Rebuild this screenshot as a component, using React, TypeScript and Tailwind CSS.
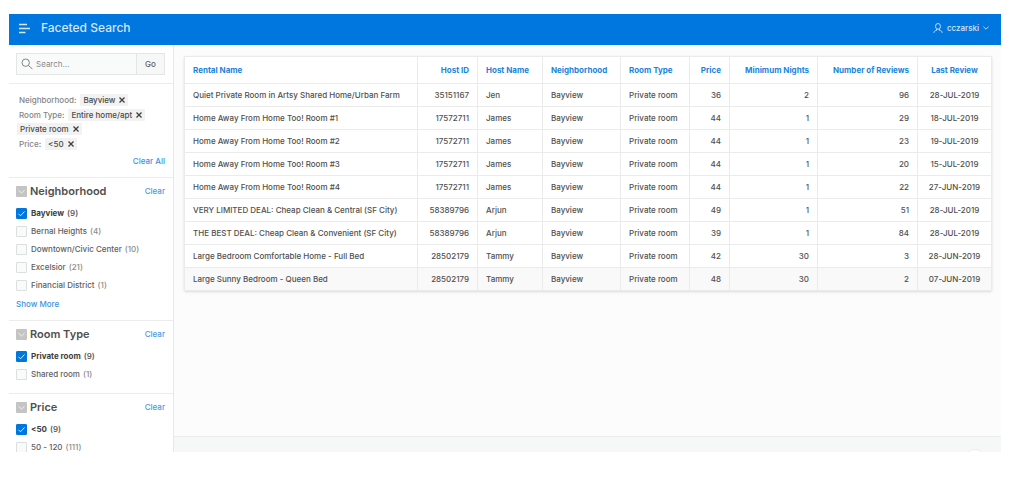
import { useState } from 'react'

type FacetItem = { label: string; count: number; checked?: boolean }
type Facet = { title: string; items: FacetItem[]; more?: boolean }

const filters = [
  { label: 'Neighborhood', values: ['Bayview'] },
  { label: 'Room Type', values: ['Entire home/apt', 'Private room'] },
  { label: 'Price', values: ['<50'] },
]

const facets: Facet[] = [
  {
    title: 'Neighborhood',
    more: true,
    items: [
      { label: 'Bayview', count: 9, checked: true },
      { label: 'Bernal Heights', count: 4 },
      { label: 'Downtown/Civic Center', count: 10 },
      { label: 'Excelsior', count: 21 },
      { label: 'Financial District', count: 1 },
    ],
  },
  {
    title: 'Room Type',
    items: [
      { label: 'Private room', count: 9, checked: true },
      { label: 'Shared room', count: 1 },
    ],
  },
  {
    title: 'Price',
    items: [
      { label: '<50', count: 9, checked: true },
      { label: '50 - 120', count: 111 },
    ],
  },
]

const columns = [
  { title: 'Rental Name', width: 'w-[233px]', align: 'text-left' },
  { title: 'Host ID', width: 'w-[60px]', align: 'text-right' },
  { title: 'Host Name', width: 'w-[65px]', align: 'text-left' },
  { title: 'Neighborhood', width: 'w-[78px]', align: 'text-left' },
  { title: 'Room Type', width: 'w-[69px]', align: 'text-left' },
  { title: 'Price', width: 'w-[40px]', align: 'text-right' },
  { title: 'Minimum Nights', width: 'w-[88px]', align: 'text-right' },
  { title: 'Number of Reviews', width: 'w-[100px]', align: 'text-right' },
  { title: 'Last Review', width: 'w-[74px]', align: 'text-center' },
]

const rentals = [
  ['Quiet Private Room in Artsy Shared Home/Urban Farm', '35151167', 'Jen', 'Bayview', 'Private room', '36', '2', '96', '28-JUL-2019'],
  ['Home Away From Home Too! Room #1', '17572711', 'James', 'Bayview', 'Private room', '44', '1', '29', '18-JUL-2019'],
  ['Home Away From Home Too! Room #2', '17572711', 'James', 'Bayview', 'Private room', '44', '1', '23', '19-JUL-2019'],
  ['Home Away From Home Too! Room #3', '17572711', 'James', 'Bayview', 'Private room', '44', '1', '20', '15-JUL-2019'],
  ['Home Away From Home Too! Room #4', '17572711', 'James', 'Bayview', 'Private room', '44', '1', '22', '27-JUN-2019'],
  ['VERY LIMITED DEAL: Cheap Clean & Central (SF City)', '58389796', 'Arjun', 'Bayview', 'Private room', '49', '1', '51', '28-JUL-2019'],
  ['THE BEST DEAL: Cheap Clean & Convenient (SF City)', '58389796', 'Arjun', 'Bayview', 'Private room', '39', '1', '84', '28-JUL-2019'],
  ['Large Bedroom Comfortable Home - Full Bed', '28502179', 'Tammy', 'Bayview', 'Private room', '42', '30', '3', '28-JUN-2019'],
  ['Large Sunny Bedroom - Queen Bed', '28502179', 'Tammy', 'Bayview', 'Private room', '48', '30', '2', '07-JUN-2019'],
]

const Header = () => (
  <header className="flex h-[31px] shrink-0 items-center justify-between bg-[#0076df] pr-3 pb-[3px] pl-2.5 text-[#d3e7fa]">
    <div className="flex items-center gap-2.5">
      <button type="button" aria-label="Toggle navigation">
        <svg className="block h-3 w-3" viewBox="0 0 12 12" fill="none" stroke="currentColor" strokeWidth="1.5">
          <path d="M0 2.500h8M0 6.500h11M0 10.500h6.500" />
        </svg>
      </button>
      <h1 className="text-[12px] leading-4 font-medium">Faceted Search</h1>
    </div>
    <button type="button" className="flex items-center gap-1 text-[8px] leading-3 font-medium">
      <svg className="h-2.5 w-2.5" viewBox="0 0 10 10" fill="none" stroke="currentColor" strokeWidth="0.9">
        <ellipse cx="5" cy="3.4" rx="2.5" ry="2.9" />
        <path d="M0.8 9.8c.2-1.500 1.200-2.200 2.900-2.500v-1.300M9.200 9.800c-.2-1.500-1.200-2.200-2.900-2.500v-1.300" />
      </svg>
      <span>cczarski</span>
      <svg className="h-1.5 w-1.5" viewBox="0 0 6 6" fill="none" stroke="currentColor" strokeWidth="0.9">
        <path d="M0.400 1.600L3 4.200l2.600-2.600" />
      </svg>
    </button>
  </header>
)

const SearchBar = () => (
  <form className="flex border-b border-[#ececec] py-2 pr-2 pl-[7px]" onSubmit={(e) => e.preventDefault()}>
    <label className="flex h-[22px] min-w-0 flex-1 items-center gap-[3px] border border-[#e4e6e6] bg-[#f9fafa] pl-1">
      <svg className="h-3 w-3 shrink-0" viewBox="0 0 12 12" fill="none" stroke="#757575" strokeWidth="0.9">
        <circle cx="4.700" cy="4.700" r="3.700" />
        <path d="M7.500 7.500L11.400 11" />
      </svg>
      <input
        type="text"
        aria-label="Search"
        placeholder="Search..."
        className="w-full min-w-0 bg-transparent text-[8px] leading-3 outline-none placeholder:text-[#8a8a8a]"
      />
    </label>
    <button type="submit" className="h-[22px] w-7 border border-l-0 border-[#e4e6e6] bg-[#f6f8f8] text-[8px] font-medium text-[#606060]">
      Go
    </button>
  </form>
)

const ActiveFilters = () => (
  <div className="flex flex-col gap-[3px] border-b border-[#ececec] px-2 pt-2.5 pb-2.5 text-[8px] leading-3 font-medium">
    {filters.map((filter) => (
      <div key={filter.label} className="flex flex-wrap gap-x-1 gap-y-[2px]">
        <span className="pl-[2px] text-[#858585]">{filter.label}:</span>
        {filter.values.map((value) => (
          <span key={value} className="flex items-center gap-1 rounded-[1px] bg-[#f2f2f2] px-[3px] text-[#4a4a4a]">
            {value}
            <button type="button" aria-label={`Remove ${value}`}>
              <svg className="block h-1.5 w-1.5" viewBox="0 0 6 6" stroke="#404040" strokeWidth="1.300">
                <path d="M0.500 0.500l5 5M5.500 0.500l-5 5" />
              </svg>
            </button>
          </span>
        ))}
      </div>
    ))}
    <button type="button" className="mt-0.5 self-end text-[#3a93e2]">Clear All</button>
  </div>
)

const FacetSection = ({ facet }: { facet: Facet }) => {
  const [selected, setSelected] = useState(facet.items.filter((i) => i.checked).map((i) => i.label))

  const toggle = (label: string) =>
    setSelected((prev) => (prev.includes(label) ? prev.filter((l) => l !== label) : [...prev, label]))

  return (
    <section className="border-b border-[#ececec] pt-[5px] pr-2 pb-2.5 pl-[7px] text-[8px] font-medium last:border-b-0">
      <div className="flex h-4 items-center">
        <button type="button" aria-label={`Collapse ${facet.title}`} className="mr-[3px]">
          <svg className="block h-[11px] w-[11px]" viewBox="0 0 11 11" fill="none">
            <rect width="11" height="11" rx="1" fill="#c4c4c4" />
            <path d="M2.500 4.200l3 2.800 3-2.800" stroke="#f2f2f2" strokeWidth="1" />
          </svg>
        </button>
        <h2 className="flex-1 text-[11px] font-semibold text-[#505050]">{facet.title}</h2>
        <button type="button" className="text-[#4a9ae2]">Clear</button>
      </div>
      <ul className="mt-[5px]">
        {facet.items.map((item) => {
          const checked = selected.includes(item.label)
          return (
            <li key={item.label}>
              <label className="flex h-[18px] items-center whitespace-nowrap">
                <span className="relative mr-1 h-[11px] w-[11px]">
                  <input
                    type="checkbox"
                    checked={checked}
                    onChange={() => toggle(item.label)}
                    className="block h-[11px] w-[11px] appearance-none rounded-[1px] border border-[#dcdfdf] bg-[#f9fafa] checked:border-[#0076df] checked:bg-[#0076df]"
                  />
                  {checked && (
                    <svg className="pointer-events-none absolute inset-0" viewBox="0 0 11 11" fill="none" stroke="#d6eaff" strokeWidth="1">
                      <path d="M2.500 5.800l2 2 4-4.300" />
                    </svg>
                  )}
                </span>
                <span className={checked ? 'font-bold text-[#404040]' : 'text-[#606060]'}>{item.label}</span>
                <span className={checked ? 'ml-[3px] font-semibold text-[#606060]' : 'ml-[3px] text-[#8c8c8c]'}>({item.count})</span>
              </label>
            </li>
          )
        })}
      </ul>
      {facet.more && (
        <button type="button" className="mt-1 block leading-3 text-[#3a93e2]">Show More</button>
      )}
    </section>
  )
}

const RentalTable = () => (
  <table className="w-full table-fixed border-collapse border border-[#e6e6e6] bg-white text-[8px] font-medium whitespace-nowrap text-[#505050] shadow-sm">
    <thead>
      <tr className="h-[27px]">
        {columns.map((col) => (
          <th key={col.title} scope="col" className={`${col.width} ${col.align} border border-[#ebebeb] px-2 font-bold text-[#1a83e0]`}>
            {col.title}
          </th>
        ))}
      </tr>
    </thead>
    <tbody>
      {rentals.map((row) => (
        <tr key={row[0]} className="h-[23px] last:bg-[#f9f9f9]">
          {row.map((cell, i) => (
            <td key={columns[i].title} className={`${columns[i].align} border border-[#ebebeb] px-2`}>
              {cell}
            </td>
          ))}
        </tr>
      ))}
    </tbody>
  </table>
)

const App = () => {
  return (
    <div className="h-screen overflow-hidden bg-white pt-3.5 pr-[23px] pb-9 pl-[9px] font-['Inter','Liberation_Sans',sans-serif]">
      <div className="flex h-full flex-col overflow-hidden">
        <Header />
        <div className="flex min-h-0 flex-1">
          <aside className="w-[165px] shrink-0 overflow-hidden border-r border-[#e8e8e8] bg-white">
            <SearchBar />
            <ActiveFilters />
            {facets.map((facet) => (
              <FacetSection key={facet.title} facet={facet} />
            ))}
          </aside>
          <div className="flex min-w-0 flex-1 flex-col bg-[#fcfcfc]">
            <main className="flex-1 px-2.5 pt-[11px]">
              <RentalTable />
            </main>
            <footer className="flex h-4 shrink-0 justify-end overflow-hidden border-t border-[#ececec] bg-[#f6f8f8] pt-3 pr-4">
              <button type="button" aria-label="Back to top" className="h-5 w-5 shrink-0 rounded-full border border-[#ececec] bg-white" />
            </footer>
          </div>
        </div>
      </div>
    </div>
  )
}

export default App
